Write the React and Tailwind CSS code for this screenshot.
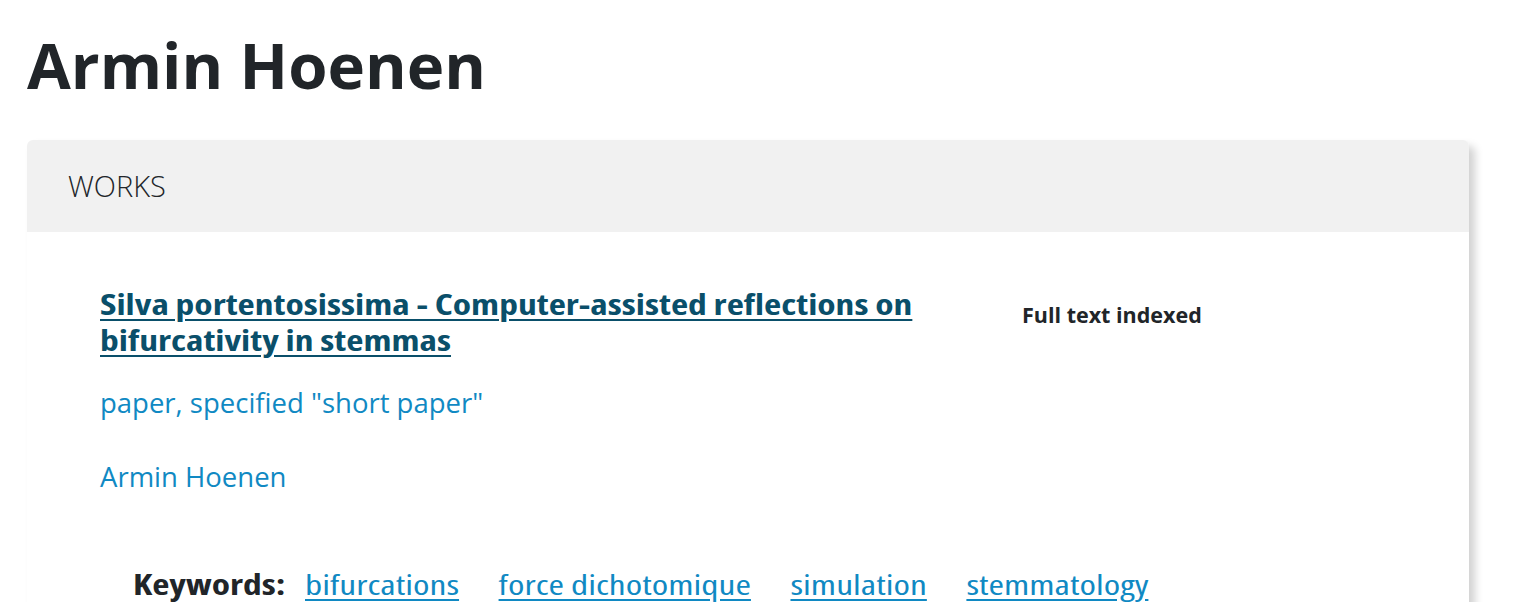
export default function App() {
  const keywords = ['bifurcations', 'force dichotomique', 'simulation', 'stemmatology'];

  return (
    <div className="min-h-screen bg-white font-['Open_Sans',sans-serif] text-[#212529]">
      <div className="pl-[27px] pr-[49px] pt-[20px]">
        <h1 className="text-[63.5px] font-bold leading-[90px]">Armin Hoenen</h1>

        <div className="mt-[30px] rounded-t-[6px] bg-white shadow-[6px_6px_8px_rgba(0,0,0,0.18)]">
          <div className="flex h-[92px] items-center rounded-t-[6px] bg-[#f1f1f1] px-[41px]">
            <h2 className="text-[29px] font-light uppercase">Works</h2>
          </div>

          <div className="pl-[73px] pr-[40px] pt-[54px] pb-[40px]">
            <div className="flex items-start">
              <div className="w-[922px] shrink-0">
                <a
                  href="#"
                  className="block w-[700px] origin-left scale-x-[1.295] text-[29px] font-bold font-stretch-condensed leading-[36px] text-[#0a4f6a] underline decoration-2 underline-offset-[4px]"
                >
                  Silva portentosissima - Computer-assisted reflections on bifurcativity in stemmas
                </a>
              </div>
              <span className="mt-[11px] text-[21.5px] font-bold leading-[36px]">Full text indexed</span>
            </div>

            <p className="mt-[25px] text-[27.5px] leading-[40px] text-[#1089c3]">paper, specified "short paper"</p>
            <p className="mt-[34px] text-[27.5px] leading-[40px] text-[#1089c3]">Armin Hoenen</p>

            <div className="mt-[67px] pl-[33px]">
              <div className="flex w-fit origin-left scale-x-[1.34] items-baseline gap-[29.5px] text-[28px] leading-[40px] font-stretch-condensed">
                <span className="mr-[-15px] font-bold">Keywords:</span>
                {keywords.map((k) => (
                  <a key={k} href="#" className="text-[#1089c3] underline underline-offset-[4px]">
                    {k}
                  </a>
                ))}
              </div>
            </div>
          </div>
        </div>
      </div>
    </div>
  );
}
